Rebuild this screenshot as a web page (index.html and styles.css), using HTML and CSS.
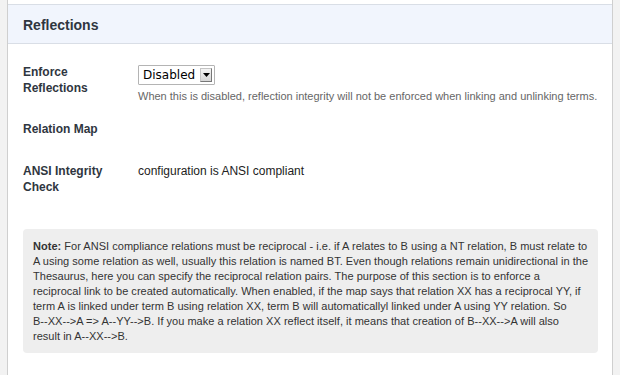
FILE: index.html
```html
<!DOCTYPE html>
<html>
<head>
<meta charset="utf-8">
<link rel="stylesheet" href="styles.css">
</head>
<body>
<div class="panel">
  <div class="panel-head"><h2 class="title">Reflections</h2></div>
  <div class="panel-body">
    <div class="row row-enforce">
      <div class="label">Enforce<br>Reflections</div>
      <div class="value">
        <span class="select">
          <span class="select-text">Disabled</span>
          <span class="select-btn">
            <svg width="7" height="4" viewBox="0 0 7 4"><path d="M0 0H7L3.5 4Z" fill="#000"/></svg>
          </span>
        </span>
        <div class="help">When this is disabled, reflection integrity will not be enforced when linking and unlinking terms.</div>
      </div>
    </div>
    <div class="row row-map">
      <div class="label">Relation Map</div>
      <div class="value"></div>
    </div>
    <div class="row row-ansi">
      <div class="label">ANSI Integrity<br>Check</div>
      <div class="value text">configuration is ANSI compliant</div>
    </div>
    <div class="note"><span class="note-lead">Note:</span> For ANSI compliance relations must be reciprocal - i.e. if A relates to B using a NT relation, B must relate to<br>A using some relation as well, usually this relation is named BT. Even though relations remain unidirectional in the<br>Thesaurus, here you can specify the reciprocal relation pairs. The purpose of this section is to enforce a<br>reciprocal link to be created automatically. When enabled, if the map says that relation XX has a reciprocal YY, if<br>term A is linked under term B using relation XX, term B will automaticallyl linked under A using YY relation. So<br>B--XX--&gt;A =&gt; A--YY--&gt;B. If you make a relation XX reflect itself, it means that creation of B--XX--&gt;A will also<br>result in A--XX--&gt;B.</div>
  </div>
</div>
</body>
</html>
```
FILE: styles.css
```css
html, body {
  margin: 0;
  padding: 0;
  background: #f2f2f2;
  height: 100%;
}
body {
  font-family: "Liberation Sans", Arial, sans-serif;
  color: #333;
}
.panel {
  margin: 0 7px;
  background: #fff;
  border-left: 1px solid #cfcfcf;
  border-right: 1px solid #cfcfcf;
  padding-top: 4px;
  min-height: 371px;
}
.panel-head {
  background: #f1f5fd;
  border-top: 1px solid #d9dee6;
  border-bottom: 1px solid #d9dee6;
  height: 38px;
  box-sizing: border-box;
  height: 40px;
  display: flex;
  align-items: center;
  padding: 2px 0 0 15px;
}
.title {
  margin: 0;
  font-size: 14px;
  font-weight: bold;
  color: #2f3640;
}
.panel-body {
  padding: 20px 14px 0 15px;
}
.row {
  display: grid;
  grid-template-columns: 115px 1fr;
}
.label {
  font-size: 12px;
  font-weight: bold;
  line-height: 16px;
  color: #2f3640;
}
.row-enforce { height: 57px; }
.row-map { height: 42px; }
.row-ansi { height: 66px; }
.value.text {
  font-size: 12px;
  line-height: 16px;
  color: #222;
}
.select {
  display: inline-flex;
  align-items: center;
  justify-content: space-between;
  width: 70px;
  height: 18px;
  margin-top: 1px;
  border: 1px solid #b4b4b4;
  border-radius: 1px;
  background: #fff;
  padding: 0 1px 0 4px;
  font-family: "DejaVu Sans", sans-serif;
  font-size: 12px;
  color: #000;
  box-sizing: content-box;
}
.select-btn {
  width: 10px;
  height: 12px;
  background: linear-gradient(#f4f4f4, #d6d6d6);
  border: 1px solid #c4c4c4;
  border-right-color: #777;
  border-bottom-color: #777;
  display: flex;
  align-items: center;
  justify-content: center;
  margin-right: 1px;
}
.select-btn svg { display: block; }
.help {
  font-size: 11px;
  line-height: 14px;
  color: #666;
  margin-top: 4px;
}
.note {
  background: #eee;
  border-radius: 4px;
  padding: 10px 10px 9px 10px;
  font-size: 11px;
  letter-spacing: 0.025px;
  line-height: 15px;
  color: #333;
  width: 555px;
  white-space: nowrap;
}
.note-lead { font-weight: bold; color: #333; }
```
